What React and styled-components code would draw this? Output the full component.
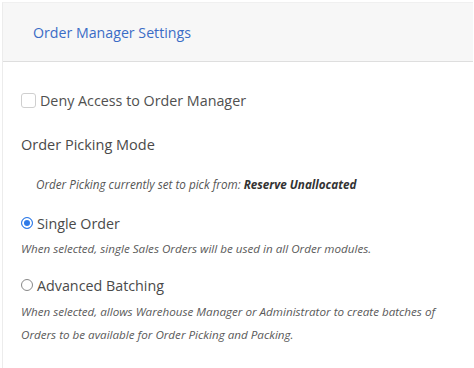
import React from "react";
import styled, { createGlobalStyle } from "styled-components";

const GlobalStyle = createGlobalStyle`
  body {
    margin: 0;
    background: #fff;
    font-family: "Open Sans", "Noto Sans", sans-serif;
  }
`;

const Card = styled.div`
  margin: 2px 1px 0 2px;
  border-left: 1px solid #ececec;
  border-top: 1px solid #f0f0f0;
  min-height: 366px;
  box-sizing: border-box;
`;

const CardHeader = styled.div`
  height: 58px;
  background: #f7f7f7;
  border-bottom: 1px solid #dedede;
  display: flex;
  align-items: center;
  padding-left: 30px;
  font-size: 14.2px;
  color: #3b6cc6;
`;

const CardBody = styled.div`
  padding: 28px 18px 0 18px;
  color: #4a4a4a;
`;

const CheckRow = styled.label`
  display: flex;
  align-items: center;
  gap: 4px;
  font-size: 14.3px;
  color: #505050;
  height: 20px;
`;

const CheckBox = styled.span`
  width: 13px;
  height: 13px;
  border: 1px solid #cfcfcf;
  border-radius: 3px;
  background: #fff;
`;

const SectionTitle = styled.div`
  margin-top: 25px;
  font-size: 14.5px;
  color: #4a4a4a;
  height: 20px;
  line-height: 20px;
`;

const Note = styled.div`
  margin-top: 21px;
  padding-left: 15px;
  font-size: 11.7px;
  font-style: italic;
  color: #555;
  b {
    font-weight: 700;
    color: #333;
  }
`;

const Option = styled.div`
  margin-top: ${(p) => p.$top}px;
`;

const RadioRow = styled.div`
  display: flex;
  align-items: center;
  gap: 4px;
  font-size: 14.3px;
  color: #4a4a4a;
  height: 20px;
`;

const Radio = styled.span`
  width: 10px;
  height: 10px;
  border-radius: 50%;
  border: 1px solid ${(p) => (p.$checked ? "#2f7be8" : "#888")};
  background: ${(p) => (p.$checked ? "#2f7be8" : "#fff")};
  box-shadow: ${(p) => (p.$checked ? "inset 0 0 0 2px #fff" : "none")};
`;

const Help = styled.div`
  margin-top: ${(p) => p.$top}px;
  font-size: 11.65px;
  font-style: italic;
  color: #5a5a5a;
  line-height: 23px;
`;

export default function App() {
  return (
    <>
      <GlobalStyle />
      <Card>
        <CardHeader>Order Manager Settings</CardHeader>
        <CardBody>
          <CheckRow>
            <CheckBox />
            Deny Access to Order Manager
          </CheckRow>
          <SectionTitle>Order Picking Mode</SectionTitle>
          <Note>
            Order Picking currently set to pick from: <b>Reserve Unallocated</b>
          </Note>
          <Option $top={21}>
            <RadioRow>
              <Radio $checked />
              Single Order
            </RadioRow>
            <Help $top={4}>When selected, single Sales Orders will be used in all Order modules.</Help>
          </Option>
          <Option $top={15}>
            <RadioRow>
              <Radio />
              Advanced Batching
            </RadioRow>
            <Help $top={5}>
              When selected, allows Warehouse Manager or Administrator to create batches of
              <br />
              Orders to be available for Order Picking and Packing.
            </Help>
          </Option>
        </CardBody>
      </Card>
    </>
  );
}
